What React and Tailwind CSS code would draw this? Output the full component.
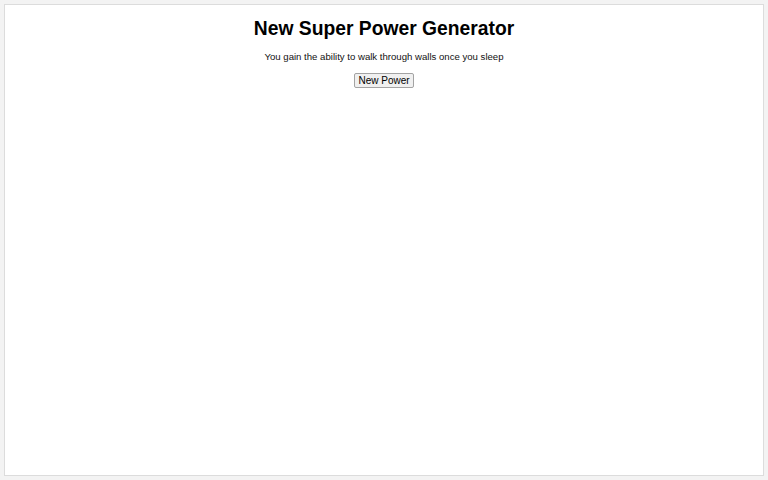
export default function App() {
  return (
    <div className="flex h-screen flex-col bg-[#f3f3f3] p-1 font-['Liberation_Sans',Arial,sans-serif]">
      <div className="flex flex-1 flex-col items-center border border-[#dcdcdc] bg-white pt-[12px]">
        <h1 className="text-[19.3px] font-bold leading-[23px] text-black">New Super Power Generator</h1>
        <p className="mt-[11px] text-[9.6px] leading-[12px] text-[#111]">
          You gain the ability to walk through walls once you sleep
        </p>
        <button
          type="button"
          className="mt-[10px] rounded-[2px] border border-[#a3a3a3] bg-[#f0f0f0] px-[3.5px] text-[10px] leading-[13px] text-black"
        >
          New Power
        </button>
      </div>
    </div>
  )
}
